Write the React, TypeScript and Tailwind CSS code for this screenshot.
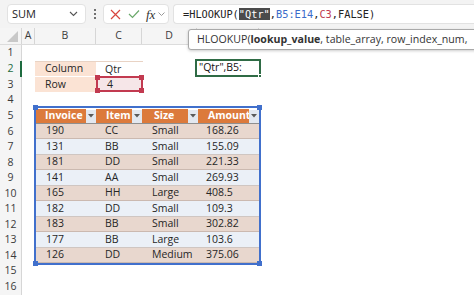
import React from "react";

const cols = [
  { key: "A", w: "w-[13px]" },
  { key: "B", w: "w-[61px]" },
  { key: "C", w: "w-[46px]" },
  { key: "D", w: "w-[55px]" },
  { key: "E", w: "w-[62px]" },
];

const data = [
  ["190", "CC", "Small", "168.26"],
  ["131", "BB", "Small", "155.09"],
  ["181", "DD", "Small", "221.33"],
  ["141", "AA", "Small", "269.93"],
  ["165", "HH", "Large", "408.5"],
  ["182", "DD", "Small", "109.3"],
  ["183", "BB", "Small", "302.82"],
  ["177", "BB", "Large", "103.6"],
  ["126", "DD", "Medium", "375.06"],
];

function Drop() {
  return (
    <div className="w-[10px] h-[13px] bg-[#e3e8f0] flex items-center justify-center shrink-0">
      <svg width="6" height="4" viewBox="0 0 6 4">
        <path d="M0 0 L6 0 L3 3.5 Z" fill="#5a5a5a" />
      </svg>
    </div>
  );
}

function RowHead({ n, active }: { n: number; active?: boolean }) {
  return (
    <div
      className={`w-[22px] shrink-0 h-full flex items-center justify-center border-r border-[#d6d6d6] bg-[#f5f5f5] relative ${
        active ? "text-[#1e6b3f]" : "text-[#3b3b3b]"
      }`}
    >
      {n}
      {active && <div className="absolute right-[-1px] top-0 bottom-0 w-[2px] bg-[#1e6b3f]" />}
    </div>
  );
}

export default function App() {
  const mono = "font-['DejaVu_Sans_Mono',monospace]";
  return (
    <div className="w-[474px] h-[296px] overflow-hidden bg-white relative font-['Open_Sans',sans-serif] text-[10.5px] text-[#262626]">
      {/* Toolbar */}
      <div className="h-[28px] bg-[#f3f3f3] flex items-center pl-[7px] gap-0">
        <div className="w-[79px] h-[20px] bg-white rounded-[4px] border border-[#e2e2e2] flex items-center justify-between pl-[4px] pr-[7px]">
          <span className="text-[11px] text-[#222]">SUM</span>
          <svg width="9" height="6" viewBox="0 0 9 6">
            <path d="M1 1 L4.5 4.5 L8 1" stroke="#555" strokeWidth="1.1" fill="none" />
          </svg>
        </div>
        <div className="w-[17px] flex flex-col items-center gap-[2px]">
          <div className="w-[2px] h-[2px] bg-[#444] rounded-full" />
          <div className="w-[2px] h-[2px] bg-[#444] rounded-full" />
          <div className="w-[2px] h-[2px] bg-[#444] rounded-full" />
        </div>
        <div className="w-[66px] h-[20px] bg-white rounded-[4px] border border-[#e2e2e2] flex items-center pl-[6px] gap-[7px]">
          <svg width="11" height="11" viewBox="0 0 11 11">
            <path d="M1 1 L10 10 M10 1 L1 10" stroke="#d8463f" strokeWidth="1.2" />
          </svg>
          <svg width="12" height="10" viewBox="0 0 12 10">
            <path d="M1 5 L4.5 8.5 L11 1.5" stroke="#6aa86a" strokeWidth="1.2" fill="none" />
          </svg>
          <span className="font-['Liberation_Serif',serif] italic text-[13px] text-[#333] leading-none -ml-[1px]">fx</span>
          <svg width="7" height="5" viewBox="0 0 7 5" className="-ml-[4px]">
            <path d="M0.5 0.5 L3.5 3.5 L6.5 0.5" stroke="#999" strokeWidth="1" fill="none" />
          </svg>
        </div>
        <div className="ml-[4px] flex-1 h-[20px] bg-white rounded-l-[4px] border border-r-0 border-[#e2e2e2] flex items-center pl-[9px]">
          <span className={`${mono} text-[10.3px] text-[#222] whitespace-pre leading-none`}>
            =HLOOKUP(
            <span className="bg-[#4b4b4b] text-white px-0">"Qtr"</span>
            ,<span className="text-[#3a6cc9]">B5:E14</span>,<span className="text-[#c0394f]">C3</span>,FALSE)
          </span>
        </div>
      </div>

      {/* Column headers */}
      <div className="h-[17px] flex bg-[#f5f5f5] border-b border-[#dcdcdc] text-[#3b3b3b]">
        <div className="w-[22px] shrink-0 border-r border-[#d6d6d6] flex items-end justify-end pb-[2px] pr-[3px]">
          <svg width="11" height="11" viewBox="0 0 11 11">
            <path d="M11 0 L11 11 L0 11 Z" fill="#c8c8c8" />
          </svg>
        </div>
        {cols.map((c) => (
          <div key={c.key} className={`${c.w} shrink-0 border-r border-[#d6d6d6] flex items-center justify-center`}>
            {c.key}
          </div>
        ))}
        <div className="flex-1" />
      </div>

      {/* Rows */}
      <div className="flex flex-col">
        <div className="h-[16px] flex">
          <RowHead n={1} />
        </div>
        <div className="h-[16px] flex">
          <RowHead n={2} active />
          <div className="w-[13px]" />
          <div className="w-[61px] bg-[#fbe3d4] border-t border-[#e9d3c4] border-b border-b-white flex items-center pl-[10px]">Column</div>
          <div className="w-[47px] border-t border-[#e9d3c4] flex items-center pl-[9px]">Qtr</div>
        </div>
        <div className="h-[15px] flex">
          <RowHead n={3} />
          <div className="w-[13px]" />
          <div className="w-[61px] bg-[#fbe3d4] flex items-center pl-[10px]">Row</div>
          <div className="w-[47px] bg-[#f6e6e8] flex items-center pl-[11px]">4</div>
        </div>
        <div className="h-[16px] flex">
          <RowHead n={4} />
        </div>
        <div className="h-[16px] flex">
          <RowHead n={5} />
          <div className="w-[13px]" />
          <div className="w-[224px] flex items-center border-b border-[#8f8f8f] pt-[1px]">
            <div className="w-[51px] h-[14px] bg-[#dc7a3c] text-white font-bold flex items-center pl-[10px]">Invoice</div>
            <Drop />
            <div className="w-[36px] h-[14px] bg-[#dc7a3c] text-white font-bold flex items-center pl-[10px]">Item</div>
            <Drop />
            <div className="w-[46px] h-[14px] bg-[#dc7a3c] text-white font-bold flex items-center pl-[12px]">Size</div>
            <Drop />
            <div className="w-[51px] h-[14px] bg-[#dc7a3c] text-white font-bold flex items-center pl-[10px]">Amount</div>
            <Drop />
          </div>
        </div>
        {data.map((r, i) => (
          <div key={i} className={`${i % 2 === 0 ? "h-[15px]" : "h-[16px]"} flex`}>
            <RowHead n={6 + i} />
            <div className="w-[13px]" />
            <div
              className={`w-[224px] flex items-center border-b ${
                i % 2 === 0 ? "bg-[#e8d7ce] border-[#cbb9b0]" : "bg-[#ebf0f7] border-[#cfc6c2]"
              }`}
            >
              <div className="w-[61px] pl-[11px]">{r[0]}</div>
              <div className="w-[46px] pl-[9px]">{r[1]}</div>
              <div className="w-[55px] pl-[10px]">{r[2]}</div>
              <div className="w-[62px] pl-[9px]">{r[3]}</div>
            </div>
          </div>
        ))}
        <div className="h-[16px] flex">
          <RowHead n={15} />
        </div>
        <div className="h-[16px] flex">
          <RowHead n={16} />
        </div>
      </div>

      {/* Reference highlight C3 */}
      <div className="absolute left-[96px] top-[76px] w-[47px] h-[16px] border-2 border-[#c23a50]">
        <div className="absolute -left-[3px] -top-[3px] w-[5px] h-[5px] bg-[#c23a50]" />
        <div className="absolute -right-[3px] -top-[3px] w-[5px] h-[5px] bg-[#c23a50]" />
        <div className="absolute -left-[3px] -bottom-[3px] w-[5px] h-[5px] bg-[#c23a50]" />
        <div className="absolute -right-[3px] -bottom-[3px] w-[5px] h-[5px] bg-[#c23a50]" />
      </div>

      {/* Reference highlight B5:E14 */}
      <div className="absolute left-[34px] top-[106px] w-[227px] h-[159px] border-2 border-[#4170cc]">
        <div className="absolute -left-[3px] -top-[3px] w-[5px] h-[5px] bg-[#4170cc]" />
        <div className="absolute -right-[3px] -top-[3px] w-[5px] h-[5px] bg-[#4170cc]" />
        <div className="absolute -left-[3px] -bottom-[3px] w-[5px] h-[5px] bg-[#4170cc]" />
        <div className="absolute -right-[3px] -bottom-[3px] w-[5px] h-[5px] bg-[#4170cc]" />
      </div>

      {/* Editing cell E2 */}
      <div className="absolute left-[195px] top-[59px] w-[66px] h-[18px] border-2 border-[#2f6b45] bg-white flex items-center pl-[2px] text-[#111]">
        "Qtr",B5:
        <div className="absolute -right-[3px] -bottom-[3px] w-[4px] h-[4px] bg-[#2f6b45] border border-white" />
      </div>

      {/* Tooltip */}
      <div className="absolute left-[188px] top-[29px] w-[300px] h-[21px] bg-white border border-[#a9a9a9] rounded-[3px] shadow-[0_1px_3px_rgba(0,0,0,0.2)] flex items-center pl-[8px] text-[10.6px] text-[#333] whitespace-nowrap">
        HLOOKUP(<span className="font-bold">lookup_value</span>, table_array, row_index_num,
      </div>
    </div>
  );
}
